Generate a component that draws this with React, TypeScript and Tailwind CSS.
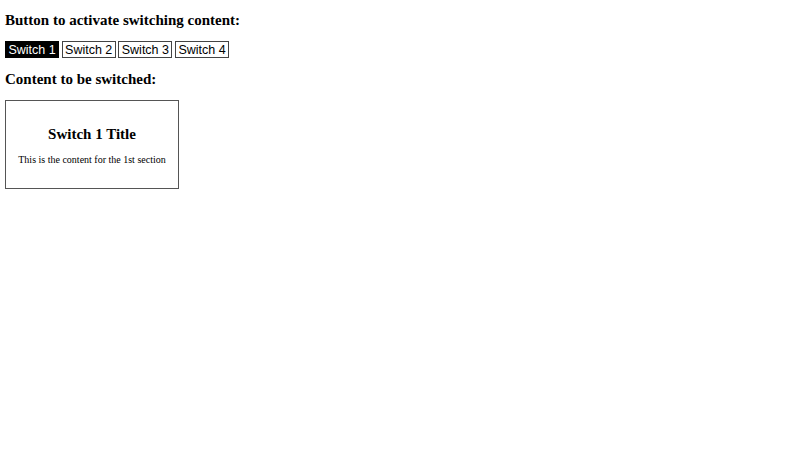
import { useState } from "react"

const sections = [
  { title: "Switch 1 Title", text: "This is the content for the 1st section" },
  { title: "Switch 2 Title", text: "This is the content for the 2nd section" },
  { title: "Switch 3 Title", text: "This is the content for the 3rd section" },
  { title: "Switch 4 Title", text: "This is the content for the 4th section" },
]

const App = () => {
  const [active, setActive] = useState(0)
  const current = sections[active]

  return (
    <div className="bg-white min-h-[450px] px-[5px] pt-[11px] font-['Liberation_Serif',serif] text-black">
      <h3 className="text-[15px] leading-[18px] font-bold">Button to activate switching content:</h3>
      <div className="mt-[12px] flex gap-[2.7px]">
        {sections.map((s, i) => (
          <button
            key={s.title}
            onClick={() => setActive(i)}
            className={
              "w-[54px] h-[17px] border text-[12.5px] leading-[16px] text-center font-['Liberation_Sans',sans-serif] " +
              (i === active ? "bg-black text-white border-black" : "bg-white text-black border-[#444]")
            }
          >
            Switch {i + 1}
          </button>
        ))}
      </div>
      <h3 className="mt-[12px] text-[15px] leading-[18px] font-bold">Content to be switched:</h3>
      <div className="mt-[12px] w-[174px] h-[89px] border border-[#555] flex flex-col items-center pt-[24px]">
        <h3 className="text-[15px] leading-[18px] font-bold">{current.title}</h3>
        <p className="mt-[11px] text-[10px] leading-[12px]">{current.text}</p>
      </div>
    </div>
  )
}

export default App
